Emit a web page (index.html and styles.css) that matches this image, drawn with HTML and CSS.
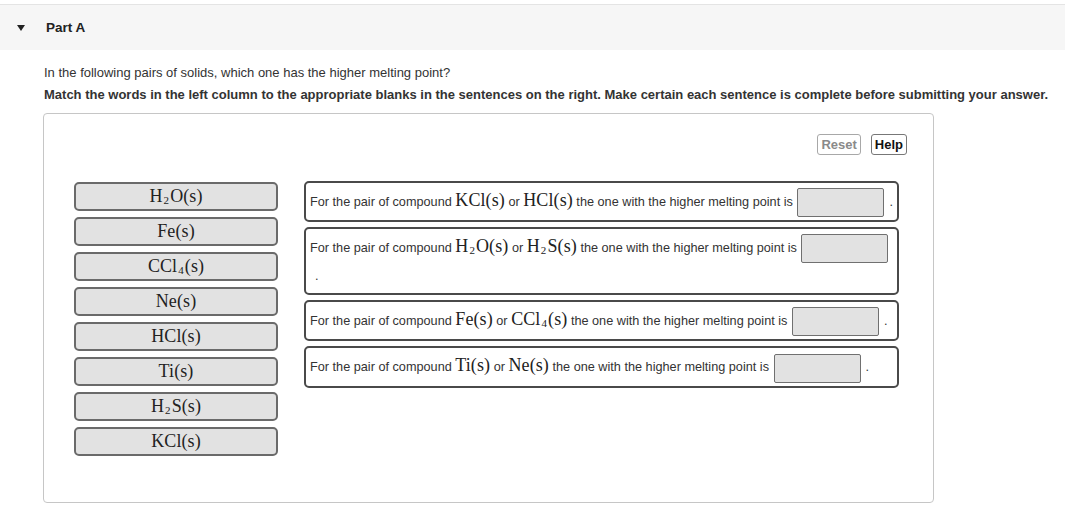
FILE: index.html
```html
<!DOCTYPE html>
<html>
<head>
<meta charset="utf-8">
<link rel="stylesheet" href="styles.css">
</head>
<body>
<div class="part-header">
  <span class="caret"></span>
  <span class="part-title">Part A</span>
</div>
<div class="content">
  <p class="intro">In the following pairs of solids, which one has the higher melting point?</p>
  <p class="instr">Match the words in the left column to the appropriate blanks in the sentences on the right. Make certain each sentence is complete before submitting your answer.</p>
  <div class="panel">
    <div class="toolbar">
      <button class="btn btn-reset">Reset</button>
      <button class="btn btn-help">Help</button>
    </div>
    <div class="columns">
      <div class="items">
        <div class="item"><span class="m">H<sub>2</sub>O(s)</span></div>
        <div class="item"><span class="m">Fe(s)</span></div>
        <div class="item"><span class="m">CCl<sub>4</sub>(s)</span></div>
        <div class="item"><span class="m">Ne(s)</span></div>
        <div class="item"><span class="m">HCl(s)</span></div>
        <div class="item"><span class="m">Ti(s)</span></div>
        <div class="item"><span class="m">H<sub>2</sub>S(s)</span></div>
        <div class="item"><span class="m">KCl(s)</span></div>
      </div>
      <div class="sentences">
        <div class="sentence">For the pair of compound <span class="m">KCl(s)</span> or <span class="m">HCl(s)</span> the one with the higher melting point is <span class="blank"></span><span class="dot">.</span></div>
        <div class="sentence">For the pair of compound <span class="m">H<sub>2</sub>O(s)</span> or <span class="m">H<sub>2</sub>S(s)</span> the one with the higher melting point is <span class="blank"></span><span class="dot">.</span></div>
        <div class="sentence">For the pair of compound <span class="m">Fe(s)</span> or <span class="m">CCl<sub>4</sub>(s)</span> the one with the higher melting point is <span class="blank"></span><span class="dot">.</span></div>
        <div class="sentence">For the pair of compound <span class="m">Ti(s)</span> or <span class="m">Ne(s)</span> the one with the higher melting point is <span class="blank"></span><span class="dot">.</span></div>
      </div>
    </div>
  </div>
</div>
</body>
</html>
```
FILE: styles.css
```css
html, body {
  margin: 0;
  padding: 0;
  background: #fff;
  font-family: "Liberation Sans", Arial, sans-serif;
  color: #333;
}

.part-header {
  margin-top: 4px;
  border-top: 1px solid #e4e4e4;
  background: #f6f6f6;
  height: 45px;
  display: flex;
  align-items: center;
  padding-left: 17px;
}

.caret {
  width: 0;
  height: 0;
  border-left: 4px solid transparent;
  border-right: 4px solid transparent;
  border-top: 6px solid #222;
  margin-right: 21px;
  margin-top: 1px;
}

.part-title {
  font-size: 13.5px;
  font-weight: bold;
  color: #222;
}

.content {
  padding-left: 43px;
}

.intro {
  margin: 15px 0 0 1px;
  font-size: 13px;
  line-height: 15px;
  color: #333;
}

.instr {
  margin: 7px 0 0 1px;
  font-size: 13px;
  line-height: 15px;
  font-weight: bold;
  color: #333;
}

.panel {
  margin-top: 11px;
  width: 889px;
  height: 388px;
  border: 1px solid #c6c6c6;
  border-radius: 4px;
}

.toolbar {
  display: flex;
  justify-content: flex-end;
  gap: 10px;
  padding: 20px 26px 0 0;
}

.btn {
  font-family: "Liberation Sans", Arial, sans-serif;
  font-size: 13px;
  font-weight: bold;
  height: 21px;
  padding: 0 3px;
  background: #fff;
  border-radius: 3px;
  line-height: 19px;
}

.btn-reset {
  border: 1px solid #a8a8a8;
  color: #8a8a8a;
}

.btn-help {
  border: 1px solid #777;
  color: #111;
}

.columns {
  display: flex;
  gap: 26px;
  margin-top: 26px;
  padding-left: 30px;
}

.items {
  width: 204px;
  display: flex;
  flex-direction: column;
  gap: 6px;
  margin-top: 1px;
}

.item {
  box-sizing: border-box;
  height: 29px;
  background: #e2e2e2;
  border: 2px solid #6a6a6a;
  border-radius: 5px;
  display: flex;
  align-items: center;
  justify-content: center;
  color: #222;
}

.m {
  font-family: "Liberation Serif", "Times New Roman", serif;
  font-size: 18px;
  letter-spacing: 0.1px;
  color: #222;
}

.m sub {
  font-size: 11px;
  vertical-align: -2px;
  line-height: 0;
  margin: 0 1px;
}

.sentences {
  width: 595px;
  display: flex;
  flex-direction: column;
  gap: 5px;
}

.sentence {
  box-sizing: border-box;
  border: 2px solid #4a4a4a;
  border-radius: 5px;
  padding: 4px 2px 3px 4px;
  font-size: 12.7px;
  line-height: 27px;
  color: #333;
}

.blank {
  display: inline-block;
  box-sizing: border-box;
  width: 87px;
  height: 29px;
  background: #e2e2e2;
  border: 1px solid #707070;
  border-radius: 2px;
  vertical-align: middle;
  margin-left: 1px;
}

.dot {
  margin-left: 5px;
}
```
